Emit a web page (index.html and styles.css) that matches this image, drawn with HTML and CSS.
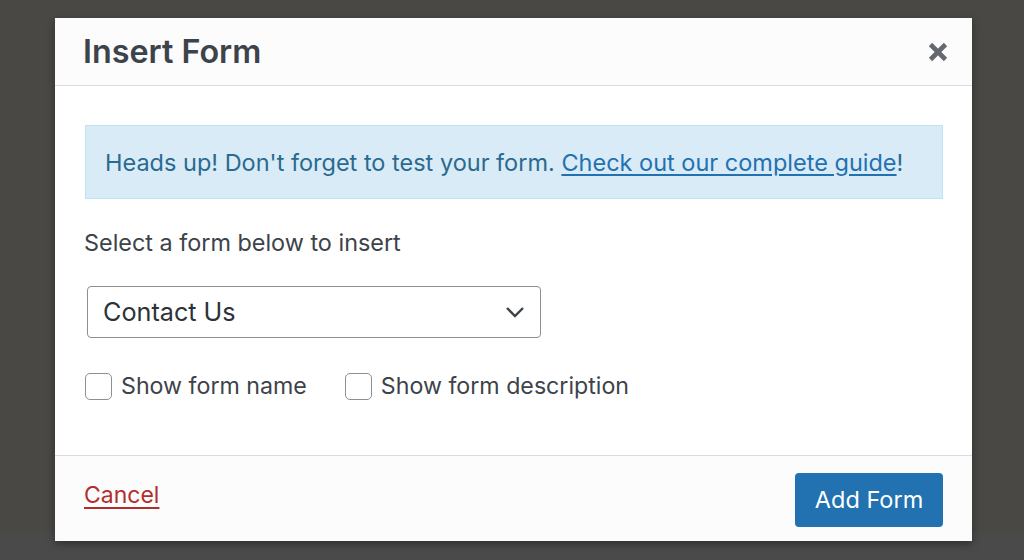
FILE: index.html
```html
<!DOCTYPE html>
<html>
<head>
<meta charset="utf-8">
<link rel="stylesheet" href="styles.css">
</head>
<body>
<div class="modal">
  <div class="modal-header">
    <h1 class="modal-title">Insert Form</h1>
    <button class="close-btn" aria-label="Close">
      <svg width="22" height="22" viewBox="0 0 22 22"><path d="M3.5 3.5 L18.5 18.5 M18.5 3.5 L3.5 18.5" stroke="#646970" stroke-width="4.6" stroke-linecap="butt"/></svg>
    </button>
  </div>
  <div class="modal-body">
    <div class="notice">Heads up! Don't forget to test your form. <a href="#" class="notice-link">Check out our complete guide</a>!</div>
    <p class="field-label">Select a form below to insert</p>
    <div class="select">
      <span class="select-value">Contact Us</span>
      <svg class="chevron" width="20" height="12" viewBox="0 0 20 12"><path d="M2 2 L10 10 L18 2" fill="none" stroke="#3c434a" stroke-width="2.4"/></svg>
    </div>
    <div class="options">
      <label class="option"><span class="checkbox"></span>Show form name</label>
      <label class="option"><span class="checkbox"></span>Show form description</label>
    </div>
  </div>
  <div class="modal-footer">
    <a href="#" class="cancel">Cancel</a>
    <button class="primary">Add Form</button>
  </div>
</div>
</body>
</html>
```
FILE: styles.css
```css
html, body {
  margin: 0;
  height: 100%;
}
body {
  background: linear-gradient(to bottom, #4a4844 0, #4a4844 532px, #4a4a4a 532px, #4a4a4a 100%);
  font-family: "Inter", "Noto Sans", sans-serif;
  padding: 18px 0 0 55px;
  box-sizing: border-box;
  overflow: hidden;
}
.modal {
  width: 917px;
  height: 523px;
  background: #fff;
  display: flex;
  flex-direction: column;
  box-shadow: 0 3px 8px rgba(0,0,0,0.35);
}
.modal-header {
  height: 67px;
  background: #fcfcfc;
  border-bottom: 1px solid #dcdcde;
  display: flex;
  align-items: center;
  justify-content: space-between;
  padding: 0 23px 0 28px;
  flex-shrink: 0;
}
.modal-title {
  margin: 0;
  font-size: 32.3px;
  line-height: 40px;
  font-weight: 600;
  color: #3c434a;
}
.close-btn {
  border: 0;
  background: transparent;
  padding: 0;
  width: 22px;
  height: 22px;
  display: flex;
}
.modal-body {
  flex: 1;
  padding: 39px 29px 0 30px;
}
.notice {
  height: 74px;
  box-sizing: border-box;
  background: #d9ebf7;
  border: 1px solid #bde5f1;
  color: #2b6a8f;
  font-size: 23.5px;
  display: flex;
  align-items: center;
  padding: 0 19px;
  white-space: pre;
}
.notice-link {
  color: #2271b1;
  text-decoration: underline;
  text-underline-offset: 3px;
}
.field-label {
  margin: 30px 0 0 -1px;
  font-size: 23.4px;
  line-height: 28px;
  color: #3c434a;
}
.select {
  margin: 29px 0 0 2px;
  width: 454px;
  height: 52px;
  box-sizing: border-box;
  border: 1px solid #8c8f94;
  border-radius: 4px;
  display: flex;
  align-items: center;
  justify-content: space-between;
  padding: 0 15px 0 15px;
  background: #fff;
}
.select-value {
  font-size: 25.2px;
  color: #2c3338;
}
.options {
  display: flex;
  gap: 38px;
  margin-top: 34px;
}
.option {
  display: flex;
  align-items: center;
  gap: 9px;
  font-size: 23.2px;
  line-height: 28px;
  color: #3c434a;
}
.checkbox {
  width: 27px;
  height: 27px;
  box-sizing: border-box;
  border: 1.5px solid #8c8f94;
  border-radius: 5px;
  background: #fff;
}
.modal-footer {
  height: 85px;
  flex-shrink: 0;
  background: #fcfcfc;
  border-top: 1px solid #dcdcde;
  display: flex;
  align-items: center;
  justify-content: space-between;
  padding: 0 29px 0 29px;
}
.cancel {
  color: #b32d2e;
  font-size: 23px;
  text-decoration: underline;
  text-underline-offset: 4px;
  margin-top: -8px;
}
.primary {
  width: 148px;
  height: 54px;
  background: #2271b1;
  color: #fff;
  border: 0;
  border-radius: 4px;
  font-family: inherit;
  font-size: 23.5px;
  margin-top: 2px;
}
```
